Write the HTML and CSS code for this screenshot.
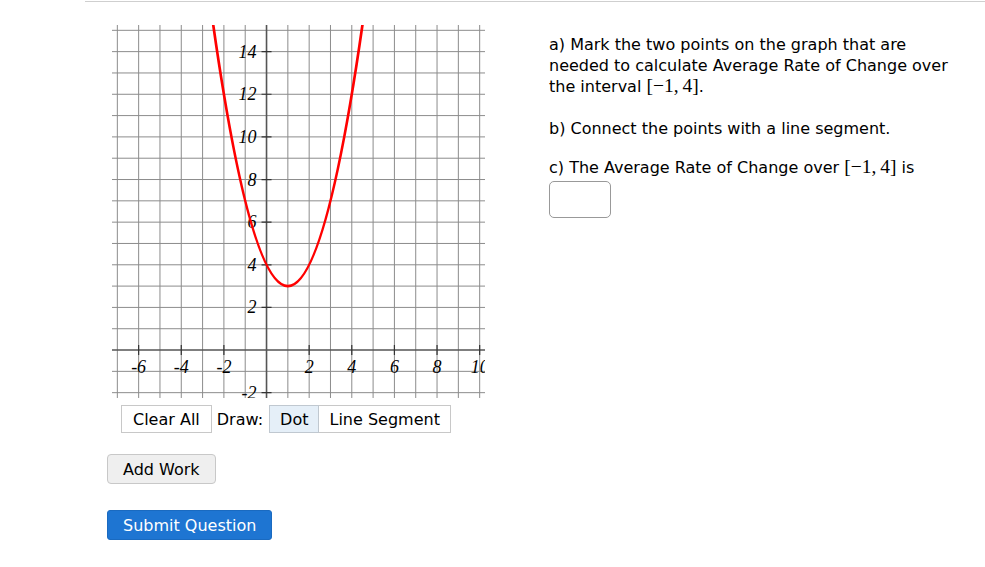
FILE: index.html
```html
<!DOCTYPE html>
<html>
<head>
<meta charset="utf-8">
<title>Average Rate of Change</title>
<link rel="stylesheet" href="styles.css">
</head>
<body>
<div class="topline"></div>
<div class="main">
  <div class="question">
    <div class="left">
      <svg class="graph" width="373" height="373" viewBox="0 0 373 373" xmlns="http://www.w3.org/2000/svg">
        <g transform="translate(154.53 325.04) scale(21.3143 -21.3143)">
          <path class="grid" d="M-7 -2.25V15.25M-6 -2.25V15.25M-5 -2.25V15.25M-4 -2.25V15.25M-3 -2.25V15.25M-2 -2.25V15.25M-1 -2.25V15.25M1 -2.25V15.25M2 -2.25V15.25M3 -2.25V15.25M4 -2.25V15.25M5 -2.25V15.25M6 -2.25V15.25M7 -2.25V15.25M8 -2.25V15.25M9 -2.25V15.25M10 -2.25V15.25M-7.25 -2H10.25M-7.25 -1H10.25M-7.25 1H10.25M-7.25 2H10.25M-7.25 3H10.25M-7.25 4H10.25M-7.25 5H10.25M-7.25 6H10.25M-7.25 7H10.25M-7.25 8H10.25M-7.25 9H10.25M-7.25 10H10.25M-7.25 11H10.25M-7.25 12H10.25M-7.25 13H10.25M-7.25 14H10.25M-7.25 15H10.25"/>
          <path class="axis" d="M-7.25 0H10.25M0 -2.25V15.25"/>
          <path class="tick" d="M-6 -0.235V0.235M-4 -0.235V0.235M-2 -0.235V0.235M2 -0.235V0.235M4 -0.235V0.235M6 -0.235V0.235M8 -0.235V0.235M10 -0.235V0.235M-0.235 -2H0.235M-0.235 2H0.235M-0.235 4H0.235M-0.235 6H0.235M-0.235 8H0.235M-0.235 10H0.235M-0.235 12H0.235M-0.235 14H0.235"/>
        </g>
        <g class="xlab">
          <text x="26.64" y="348">-6</text>
          <text x="69.27" y="348">-4</text>
          <text x="111.9" y="348">-2</text>
          <text x="197.16" y="348">2</text>
          <text x="239.79" y="348">4</text>
          <text x="282.41" y="348">6</text>
          <text x="325.04" y="348">8</text>
          <text x="367.67" y="348">10</text>
        </g>
        <g class="ylab">
          <text x="144.5" y="32.6">14</text>
          <text x="144.5" y="75.3">12</text>
          <text x="144.5" y="117.9">10</text>
          <text x="144.5" y="160.5">8</text>
          <text x="144.5" y="203.2">6</text>
          <text x="144.5" y="245.8">4</text>
          <text x="144.5" y="288.4">2</text>
          <text x="144.5" y="373.7">-2</text>
        </g>
        <g transform="translate(154.53 325.04) scale(21.3143 -21.3143)">
          <path class="curve" d="M-2.6 15.96Q1 -9.96 4.6 15.96"/>
        </g>
      </svg>
      <div class="tools">
        <button class="tbtn">Clear All</button>
        <span class="draw">Draw:</span>
        <button class="tbtn opt sel">Dot</button><button class="tbtn opt seg">Line Segment</button>
      </div>
    </div>
    <div class="right">
      <p class="qa">a) Mark the two points on the graph that are needed to calculate Average Rate of Change over the interval <span class="math">[−1,&#8201;4]</span>.</p>
      <p class="qb">b) Connect the points with a line segment.</p>
      <p class="qc">c) The Average Rate of Change over <span class="math">[−1,&#8201;4]</span> is</p>
      <input class="answer" type="text" aria-label="answer">
    </div>
  </div>
  <button class="addwork">Add Work</button>
  <button class="submit">Submit Question</button>
</div>
</body>
</html>
```
FILE: styles.css
```css
body {
  margin: 0;
  font-family: "DejaVu Sans", "Noto Sans", sans-serif;
  font-size: 16px;
  color: #000;
  background: #fff;
}

.topline {
  margin: 1px 0 0 85px;
  border-top: 1px solid #cfcfcf;
}

.main {
  padding-left: 107px;
}

.question {
  display: flex;
  padding-top: 23px;
}

.left {
  margin-left: 5px;
  width: 373px;
  flex: none;
}

.graph {
  display: block;
  width: 373px;
  height: 373px;
  overflow: hidden;
}

.grid {
  fill: none;
  stroke: #8c8c8c;
  stroke-width: 1;
  vector-effect: non-scaling-stroke;
}

.axis {
  fill: none;
  stroke: #555;
  stroke-width: 1.6;
  vector-effect: non-scaling-stroke;
}

.tick {
  fill: none;
  stroke: #333;
  stroke-width: 1.2;
  vector-effect: non-scaling-stroke;
}

.curve {
  fill: none;
  stroke: #ff0000;
  stroke-width: 2.7;
  vector-effect: non-scaling-stroke;
}

.xlab text,
.ylab text {
  font-family: "Liberation Serif", "DejaVu Serif", serif;
  font-style: italic;
  font-size: 18px;
  fill: #000;
}

.xlab text {
  text-anchor: middle;
}

.ylab text {
  text-anchor: end;
}

.tools {
  display: flex;
  align-items: center;
  margin: 7px 0 0 9px;
}

.tbtn {
  font: inherit;
  height: 28px;
  padding: 0 11px;
  border: 1px solid #c8c8c8;
  background: #fff;
  color: #000;
  margin: 0;
}

.opt {
  padding: 0 10px;
}

.draw {
  margin: 0 6px 0 5px;
}

.sel {
  background: #e5eff8;
  border-color: #c0c8d0;
}

.seg {
  border-left: none;
}

.right {
  margin-left: 64px;
  width: 410px;
  padding-top: 9px;
  line-height: 21px;
}

.right p {
  margin: 0;
}

.qb {
  margin-top: 21px !important;
}

.qc {
  margin-top: 18px !important;
}

.math {
  font-family: "Liberation Serif", "DejaVu Serif", serif;
  font-size: 19.5px;
  line-height: 1;
}

.answer {
  display: block;
  box-sizing: border-box;
  width: 62px;
  height: 37px;
  margin-top: 3px;
  border: 1px solid #999;
  border-radius: 5px;
  font: inherit;
}

.addwork {
  display: block;
  font: inherit;
  height: 30px;
  margin-top: 21px;
  padding: 0 15px;
  border: 1px solid #c8c8c8;
  border-radius: 4px;
  background: #efefef;
  color: #000;
}

.submit {
  display: block;
  font: inherit;
  height: 30px;
  margin-top: 26px;
  padding: 0 15px;
  border: 1px solid #1a6ac0;
  border-radius: 3px;
  background: #1e75d2;
  color: #fff;
}
```
